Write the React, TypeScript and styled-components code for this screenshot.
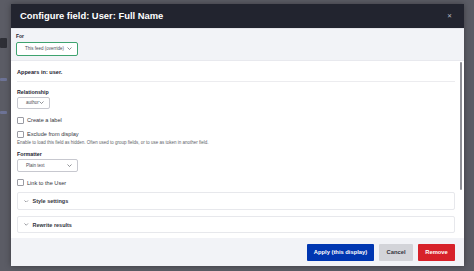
import styled, { createGlobalStyle } from "styled-components";

const GlobalStyle = createGlobalStyle`
  html, body {
    margin: 0;
    padding: 0;
    background: #5b5c65;
    font-family: "Liberation Sans", Arial, sans-serif;
  }
  * { box-sizing: border-box; }
`;

const Page = styled.div`
  width: 474px;
  height: 271px;
  display: flex;
  padding-top: 4px;
  overflow: hidden;
  background: #5b5c65;
`;

const Behind = styled.div`
  width: 11px;
  display: flex;
  flex-direction: column;
  padding-top: 34px;
  gap: 30px;
`;

const BehindBox = styled.div<{ h: number; c: string }>`
  height: ${(p) => p.h}px;
  width: 7px;
  background: ${(p) => p.c};
  border-radius: 1px;
`;

const Modal = styled.div`
  width: 453px;
  height: 262px;
  display: flex;
  flex-direction: column;
  background: #ffffff;
  box-shadow: 0 0 6px rgba(0, 0, 0, 0.35);
`;

const Header = styled.div`
  height: 24px;
  flex: none;
  background: #22242f;
  display: flex;
  align-items: center;
  justify-content: space-between;
  padding: 0 12px 1px 9px;
`;

const Title = styled.h1`
  margin: 0;
  color: #ffffff;
  font-size: 9.4px;
  font-weight: 700;
`;

const Close = styled.span`
  color: #b9bac2;
  font-size: 6px;
  line-height: 1;
`;

const TopPanel = styled.div`
  height: 33px;
  flex: none;
  background: #f2f3f7;
  border-top: 1px solid #e4e5ea;
  border-bottom: 1px solid #e8e9ee;
  padding: 5px 0 0 5px;
`;

const Label = styled.div<{ size?: number }>`
  font-size: ${(p) => p.size ?? 5.3}px;
  font-weight: 700;
  color: #222330;
  line-height: 1.1;
`;

const Select = styled.div<{ w: number; h: number; focus?: boolean }>`
  width: ${(p) => p.w}px;
  height: ${(p) => p.h}px;
  margin-top: ${(p) => (p.focus ? 2 : 1)}px;
  border: ${(p) => (p.focus ? "1.5px solid #3ea36f" : "1px solid #c7c8cf")};
  border-radius: 2px;
  background: #ffffff;
  display: flex;
  align-items: center;
  justify-content: space-between;
  padding: 0 5px 0 8px;
  font-size: 4.5px;
  color: #4a4b55;
  white-space: nowrap;
`;

const Chevron = ({ size = 6 }: { size?: number }) => (
  <svg width={size} height={size * 0.6} viewBox="0 0 10 6">
    <path d="M1 1l4 4 4-4" fill="none" stroke="#55565f" strokeWidth="1.3" />
  </svg>
);

const BodyRow = styled.div`
  flex: 1;
  display: flex;
  min-height: 0;
`;

const Content = styled.div`
  flex: 1;
  padding: 8px 4px 0 6px;
  display: flex;
  flex-direction: column;
`;

const Appears = styled.div`
  font-size: 5.6px;
  font-weight: 700;
  color: #222330;
  padding-bottom: 6px;
  border-bottom: 1px solid #ececef;
`;

const Field = styled.div<{ mt: number }>`
  margin-top: ${(p) => p.mt}px;
`;

const CheckRow = styled.div<{ mt: number }>`
  margin-top: ${(p) => p.mt}px;
  height: 7px;
  display: flex;
  align-items: center;
  gap: 3px;
  font-size: 5.6px;
  color: #33343d;
`;

const Box = styled.span`
  width: 7px;
  height: 7px;
  border: 1px solid #9a9ba3;
  border-radius: 1px;
  background: #fff;
`;

const Desc = styled.div`
  margin-top: 2.5px;
  font-size: 4.5px;
  line-height: 5px;
  color: #5e5f68;
`;

const Details = styled.div<{ mt: number; h: number }>`
  margin-top: ${(p) => p.mt}px;
  height: ${(p) => p.h}px;
  border: 1px solid #e7e8ec;
  border-radius: 2px;
  display: flex;
  align-items: center;
  gap: 4px;
  padding-left: 6px;
  font-size: 5.5px;
  font-weight: 700;
  color: #33343d;
`;

const Track = styled.div`
  width: 5px;
  flex: none;
  padding: 1px 2px 0 1px;
`;

const Thumb = styled.div`
  width: 2px;
  height: 128px;
  background: #8d8e95;
  border-radius: 1px;
`;

const Footer = styled.div`
  height: 28px;
  flex: none;
  background: #f2f3f7;
  display: flex;
  justify-content: flex-end;
  align-items: center;
  gap: 5px;
  padding: 0 9px 0 0;
`;

const Button = styled.button<{ bg: string; fg: string; w: number }>`
  width: ${(p) => p.w}px;
  height: 17px;
  border: none;
  border-radius: 1px;
  background: ${(p) => p.bg};
  color: ${(p) => p.fg};
  font-family: inherit;
  font-size: 5.8px;
  font-weight: 700;
  padding: 0;
`;

export default function App() {
  return (
    <>
      <GlobalStyle />
      <Page>
        <Behind>
          <BehindBox h={10} c="#2e2f36" />
          <BehindBox h={3} c="#6d7396" />
          <BehindBox h={3} c="#6d7396" />
        </Behind>
        <Modal>
          <Header>
            <Title>Configure field: User: Full Name</Title>
            <Close>✕</Close>
          </Header>
          <TopPanel>
            <Label size={5}>For</Label>
            <Select w={62} h={14.5} focus>
              <span>This feed (override)</span>
              <Chevron size={5} />
            </Select>
          </TopPanel>
          <BodyRow>
            <Content>
              <Appears>Appears in: user.</Appears>
              <Field mt={8}>
                <Label>Relationship</Label>
                <Select w={33} h={12}>
                  <span>author</span>
                  <Chevron size={5} />
                </Select>
              </Field>
              <CheckRow mt={8}>
                <Box />
                Create a label
              </CheckRow>
              <CheckRow mt={7}>
                <Box />
                Exclude from display
              </CheckRow>
              <Desc>
                Enable to load this field as hidden. Often used to group fields, or to use as token in another field.
              </Desc>
              <Field mt={7}>
                <Label>Formatter</Label>
                <Select w={61} h={13}>
                  <span>Plain text</span>
                  <Chevron size={5} />
                </Select>
              </Field>
              <CheckRow mt={7}>
                <Box />
                Link to the User
              </CheckRow>
              <Details mt={6} h={18}>
                <Chevron size={4.5} />
                Style settings
              </Details>
              <Details mt={6} h={17}>
                <Chevron size={4.5} />
                Rewrite results
              </Details>
            </Content>
            <Track>
              <Thumb />
            </Track>
          </BodyRow>
          <Footer>
            <Button bg="#0036b1" fg="#ffffff" w={67}>
              Apply (this display)
            </Button>
            <Button bg="#d3d4d9" fg="#33343d" w={34}>
              Cancel
            </Button>
            <Button bg="#d7222a" fg="#ffffff" w={37}>
              Remove
            </Button>
          </Footer>
        </Modal>
      </Page>
    </>
  );
}
